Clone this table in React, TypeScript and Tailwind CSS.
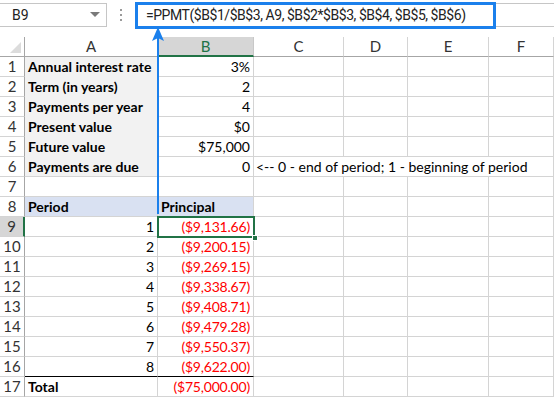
import React from "react";

const cols = ["A", "B", "C", "D", "E", "F"];

type Cell = {
  text?: string;
  bold?: boolean;
  right?: boolean;
  red?: boolean;
  bg?: string;
  blackBottom?: boolean;
};

const rows: Cell[][] = [
  [{ text: "Annual interest rate", bold: true, bg: "bg-[#f2f2f2]" }, { text: "3%", right: true }],
  [{ text: "Term (in years)", bold: true, bg: "bg-[#f2f2f2]" }, { text: "2", right: true }],
  [{ text: "Payments per year", bold: true, bg: "bg-[#f2f2f2]" }, { text: "4", right: true }],
  [{ text: "Present value", bold: true, bg: "bg-[#f2f2f2]" }, { text: "$0", right: true }],
  [{ text: "Future value", bold: true, bg: "bg-[#f2f2f2]" }, { text: "$75,000", right: true }],
  [{ text: "Payments are due", bold: true, bg: "bg-[#f2f2f2]" }, { text: "0", right: true }],
  [{}, {}],
  [{ text: "Period", bold: true, bg: "bg-[#d9e1f2]" }, { text: "Principal", bold: true, bg: "bg-[#d9e1f2]" }],
  [{ text: "1", right: true }, { text: "($9,131.66)", right: true, red: true }],
  [{ text: "2", right: true }, { text: "($9,200.15)", right: true, red: true }],
  [{ text: "3", right: true }, { text: "($9,269.15)", right: true, red: true }],
  [{ text: "4", right: true }, { text: "($9,338.67)", right: true, red: true }],
  [{ text: "5", right: true }, { text: "($9,408.71)", right: true, red: true }],
  [{ text: "6", right: true }, { text: "($9,479.28)", right: true, red: true }],
  [{ text: "7", right: true }, { text: "($9,550.37)", right: true, red: true }],
  [{ text: "8", right: true, blackBottom: true }, { text: "($9,622.00)", right: true, red: true, blackBottom: true }],
  [{ text: "Total", bold: true }, { text: "($75,000.00)", right: true, red: true }],
];

export default function App() {
  return (
    <div
      className="relative w-[554px] h-[397px] overflow-hidden bg-white text-black"
      style={{ fontFamily: "Lato, 'Noto Sans', sans-serif" }}
    >
      {/* Top bar */}
      <div className="flex h-[37px] items-start pt-[3px]">
        <div
          className="flex h-[24px] w-[107px] items-center justify-between border-y border-r border-[#c6c6c6] pl-[12px] pr-[6px] text-[14px] text-[#222]"
          style={{ fontFamily: "Roboto, sans-serif" }}
        >
          <span>B9</span>
          <svg width="10" height="6" viewBox="0 0 10 6">
            <path d="M0 0 L10 0 L5 5 Z" fill="#7a7a7a" />
          </svg>
        </div>
        <div className="flex w-[28px] h-[24px] flex-col items-center justify-center gap-[3px]">
          <div className="h-[2px] w-[2px] bg-[#9a9a9a]" />
          <div className="h-[2px] w-[2px] bg-[#9a9a9a]" />
          <div className="h-[2px] w-[2px] bg-[#9a9a9a]" />
        </div>
        <div className="flex-1 h-[24px] border-y border-[#c6c6c6] relative">
          <div
            className="absolute left-0 top-[-2px] h-[27px] w-[361px] border-[3px] border-[#1b80ec] flex items-center pl-[8px] text-[14px] tracking-[-0.45px] text-[#222] whitespace-nowrap"
            style={{ fontFamily: "Roboto, sans-serif" }}
          >
            =PPMT($B$1/$B$3, A9, $B$2*$B$3, $B$4, $B$5, $B$6)
          </div>
        </div>
      </div>

      {/* Sheet */}
      <div className="grid grid-cols-[25px_133px_96px_90px_64px_81px_65px] auto-rows-[20px] text-[14px]">
        {/* Header row */}
        <div className="relative border-r border-b border-[#a6a6a6] bg-white">
          <svg className="absolute right-[3px] bottom-[3px]" width="11" height="11" viewBox="0 0 11 11">
            <path d="M11 0 L11 11 L0 11 Z" fill="#dcdcdc" />
          </svg>
        </div>
        {cols.map((c) =>
          c === "B" ? (
            <div
              key={c}
              className="flex items-center justify-center border-r border-[#c8c8c8] border-b-2 border-b-[#217346] bg-[#d6d6d6] text-[15px] text-[#217346]"
            >
              {c}
            </div>
          ) : (
            <div
              key={c}
              className="flex items-center justify-center border-r border-[#d4d4d4] border-b border-b-[#a6a6a6] bg-white text-[15px] text-[#333]"
            >
              {c}
            </div>
          )
        )}

        {rows.map((r, i) => {
          const n = i + 1;
          const selected = n === 9;
          const cells: React.ReactNode[] = [];
          cells.push(
            <div
              key={`h${n}`}
              className={
                selected
                  ? "flex items-center justify-center border-r-2 border-r-[#217346] border-b border-b-[#d4d4d4] bg-[#d6d6d6] text-[15px] text-[#333]"
                  : "flex items-center justify-center border-r border-r-[#a6a6a6] border-b border-b-[#d4d4d4] bg-white text-[15px] text-[#333]"
              }
            >
              {n}
            </div>
          );
          r.forEach((c, j) => {
            const bottom = c.blackBottom
              ? "border-b-black"
              : c.bg === "bg-[#f2f2f2]" && n < 6
              ? "border-b-[#f2f2f2]"
              : "border-b-[#d4d4d4]";
            cells.push(
              <div
                key={`c${n}-${j}`}
                className={`flex items-center px-[3px] whitespace-nowrap border-r border-r-[#d4d4d4] border-b ${bottom} ${
                  c.bg ?? "bg-white"
                } ${c.right ? "justify-end" : "justify-start"} ${c.bold ? "font-bold" : ""} ${
                  c.red ? "text-[#ff0000] tracking-[-0.2px]" : "text-black"
                }`}
              >
                {c.text}
              </div>
            );
          });
          if (n === 6) {
            cells.push(
              <div
                key={`spill`}
                className="col-span-4 flex items-center px-[2px] whitespace-nowrap border-r border-b border-[#d4d4d4] text-black"
              >
                {"<-- 0 - end of period; 1 - beginning of period"}
              </div>
            );
          } else {
            for (let k = 0; k < 4; k++) {
              cells.push(<div key={`e${n}-${k}`} className="border-r border-b border-[#d4d4d4]" />);
            }
          }
          return <React.Fragment key={n}>{cells}</React.Fragment>;
        })}
      </div>

      {/* Selection border on B9 */}
      <div className="absolute left-[157px] top-[216px] h-[22px] w-[98px] border-2 border-[#217346] pointer-events-none" />
      <div className="absolute left-[252px] top-[235px] h-[6px] w-[6px] bg-[#217346] border border-white pointer-events-none" />

      {/* Blue arrow */}
      <svg className="absolute left-[150px] top-[26px] pointer-events-none" width="16" height="190" viewBox="0 0 16 190">
        <rect x="7" y="10" width="2" height="178" fill="#1b80ec" />
        <path d="M8 1 L14 15 L8 12 L2 15 Z" fill="#1b80ec" />
      </svg>
    </div>
  );
}
